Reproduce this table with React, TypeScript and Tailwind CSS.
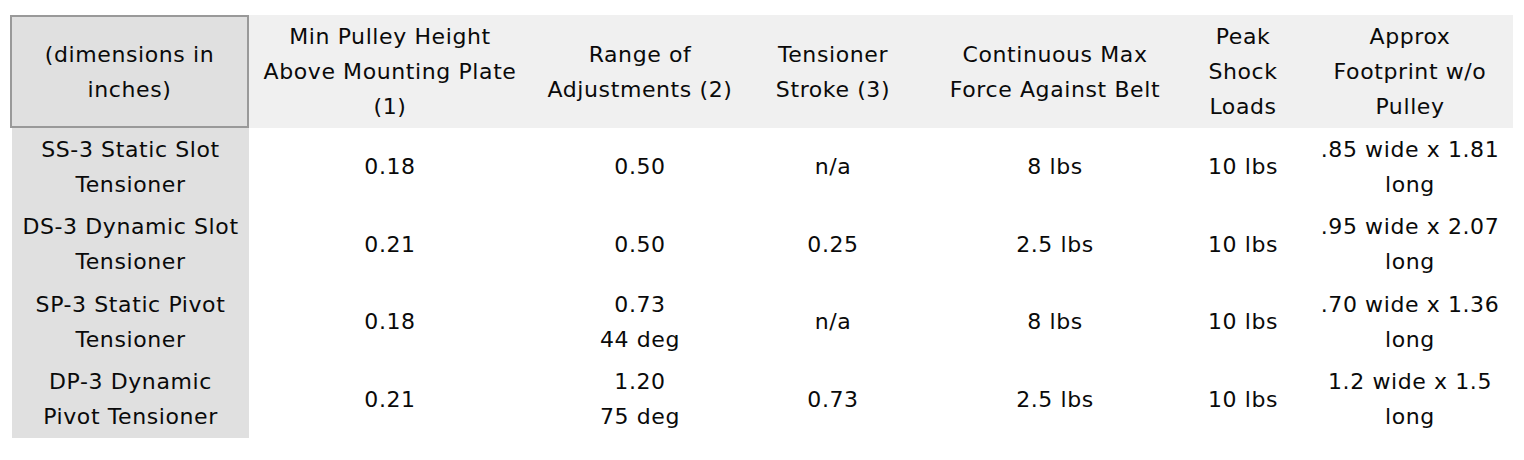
import React from "react";

const cols = [
  "w-[282px]",
  "w-[218px]",
  "w-[168px]",
  "w-[276px]",
  "w-[100px]",
  "w-[220px] pl-[14px]",
];

const header: React.ReactNode[] = [
  <>Min Pulley Height<br />Above Mounting Plate<br />(1)</>,
  <>Range of<br />Adjustments (2)</>,
  <>Tensioner<br />Stroke (3)</>,
  <>Continuous Max<br />Force Against Belt</>,
  <>Peak<br />Shock<br />Loads</>,
  <>Approx<br />Footprint w/o<br />Pulley</>,
];

const rows: { name: React.ReactNode; cells: React.ReactNode[] }[] = [
  {
    name: <>SS-3 Static Slot<br />Tensioner</>,
    cells: ["0.18", "0.50", "n/a", "8 lbs", "10 lbs", <>.85 wide x 1.81<br />long</>],
  },
  {
    name: <>DS-3 Dynamic Slot<br />Tensioner</>,
    cells: ["0.21", "0.50", "0.25", "2.5 lbs", "10 lbs", <>.95 wide x 2.07<br />long</>],
  },
  {
    name: <>SP-3 Static Pivot<br />Tensioner</>,
    cells: ["0.18", <>0.73<br />44 deg</>, "n/a", "8 lbs", "10 lbs", <>.70 wide x 1.36<br />long</>],
  },
  {
    name: <>DP-3 Dynamic<br />Pivot Tensioner</>,
    cells: ["0.21", <>1.20<br />75 deg</>, "0.73", "2.5 lbs", "10 lbs", <>1.2 wide x 1.5<br />long</>],
  },
];

export default function App() {
  return (
    <div
      className="bg-white w-[1524px] h-[460px] pt-[15px] pl-[10px] text-[#0a0a0a] text-[22px] leading-[35px] tracking-[0.6px]"
      style={{ fontFamily: '"DejaVu Sans", Verdana, sans-serif' }}
    >
      <div className="flex w-[1503px] h-[113px] bg-[#f0f0f0]">
        <div className="w-[239px] shrink-0 border-2 border-[#999] bg-[#e0e0e0] flex items-center justify-center text-center">
          <span>(dimensions in<br />inches)</span>
        </div>
        {header.map((h, i) => (
          <div key={i} className={`${cols[i]} shrink-0 flex items-center justify-center text-center`}>
            <span>{h}</span>
          </div>
        ))}
      </div>
      {rows.map((r, ri) => (
        <div key={ri} className="flex h-[77.5px]">
          <div className="ml-[2px] w-[237px] shrink-0 bg-[#e0e0e0] flex items-center justify-center text-center">
            <span>{r.name}</span>
          </div>
          {r.cells.map((c, i) => (
            <div key={i} className={`${cols[i]} shrink-0 flex items-center justify-center text-center`}>
              <span>{c}</span>
            </div>
          ))}
        </div>
      ))}
    </div>
  );
}
